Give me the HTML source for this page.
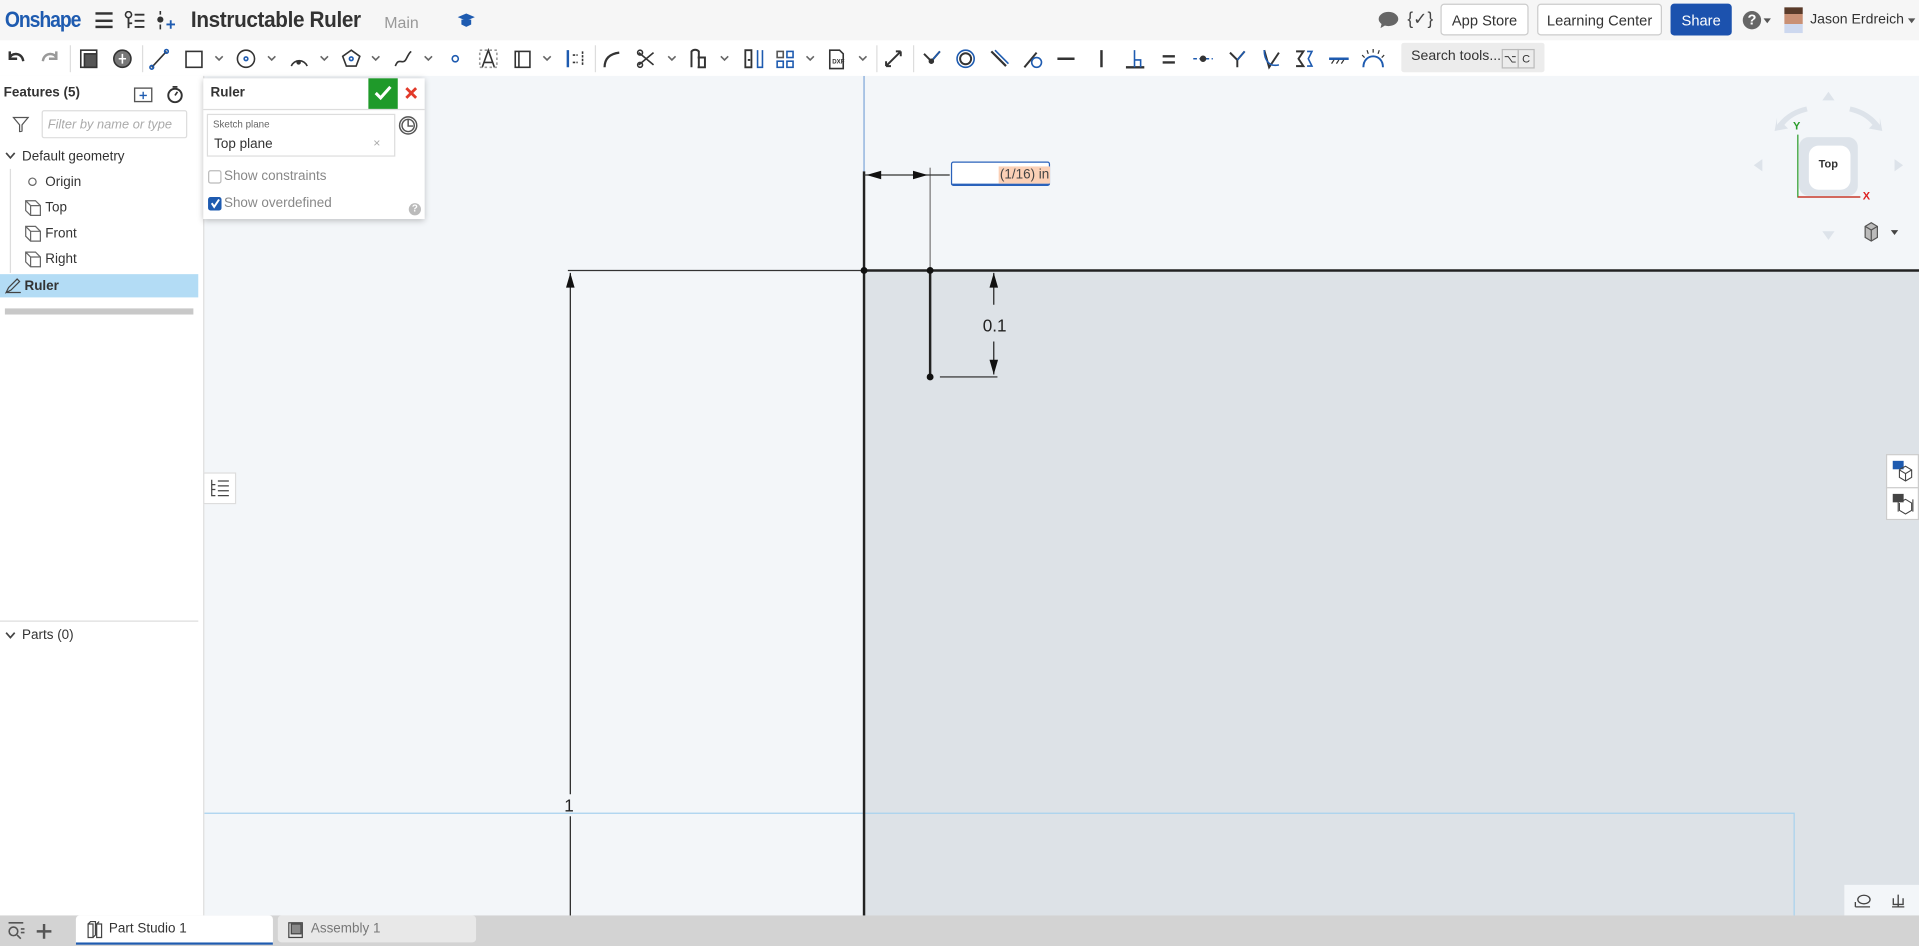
<!DOCTYPE html>
<html><head><meta charset="utf-8"><style>
html,body{margin:0;padding:0;width:1919px;height:946px;overflow:hidden;background:#f3f6f9}
#s{position:absolute;left:0;top:0;width:1568px;height:773px;transform:scale(1.22385);transform-origin:0 0;font-family:"Liberation Sans",sans-serif;color:#333;overflow:hidden;background:#f3f6f9}
.a{position:absolute}
.hdr{left:0;top:0;width:1568px;height:33px;background:#f6f6f6}
.tb{left:0;top:33px;width:1568px;height:29px;background:#fff}
.btn{position:absolute;top:3px;height:26px;border:1px solid #ccc;border-radius:3px;background:#fff;font-size:12px;line-height:26px;text-align:center;box-sizing:border-box}
.sep{position:absolute;top:37px;width:1px;height:22px;background:#ddd}
.lp{left:0;top:62px;width:166px;height:686px;background:#fff;border-right:1px solid #ddd}
.it{position:absolute;font-size:11px;color:#333}
.cb{position:absolute;width:9px;height:9px;border:1px solid #bbb;border-radius:2px;background:#fff}
</style></head><body><div id="s">
<div class="a hdr"></div>
<div class="a" style="left:4px;top:6px;font-size:18px;font-weight:bold;color:#1e5bb0;letter-spacing:-1px;transform:scaleX(.88);transform-origin:0 0">Onshape</div>
<div class="a" style="left:78px;top:10px;width:14px;height:13px;border-top:2.5px solid #333;border-bottom:2.5px solid #333;box-sizing:border-box"></div>
<div class="a" style="left:78px;top:15.5px;width:14px;height:2.5px;background:#333"></div>
<svg class="a" style="left:101px;top:9px" width="18" height="16"><circle cx="4" cy="3" r="2.5" fill="none" stroke="#333" stroke-width="1.3"/><path d="M4 6v8M4 10h3M9 3h8M9 8h8M9 13h8" stroke="#333" stroke-width="1.5" fill="none"/></svg>
<svg class="a" style="left:127px;top:8px" width="16" height="17"><path d="M4 1v3M4 12v4" stroke="#333" stroke-width="1.3"/><circle cx="4" cy="8" r="2.5" fill="#333"/><path d="M9 12h7M12.5 8.5v7" stroke="#1e5bb0" stroke-width="1.5"/></svg>
<div class="a" style="left:156px;top:6px;font-size:18px;font-weight:bold;color:#333;letter-spacing:-0.3px;transform:scaleX(.94);transform-origin:0 0">Instructable Ruler</div>
<div class="a" style="left:314px;top:11px;font-size:13px;color:#999">Main</div>
<svg class="a" style="left:373px;top:9px" width="16" height="15"><path d="M1 5l7-3 7 3-7 3z" fill="#1e5bb0"/><path d="M4 7v4l4 2 4-2V7" fill="#1e5bb0"/></svg>
<svg class="a" style="left:1126px;top:9px" width="17" height="15"><ellipse cx="8.5" cy="6.5" rx="8" ry="5.8" fill="#666"/><path d="M3 10l-1 4 5-3z" fill="#666"/></svg>
<div class="a" style="left:1150px;top:7px;font-size:14px;color:#444">{✓}</div>
<div class="btn" style="left:1177px;width:72px">App Store</div>
<div class="btn" style="left:1256px;width:102px">Learning Center</div>
<div class="btn" style="left:1365px;width:50px;background:#1c52ae;border-color:#1c52ae;color:#fff">Share</div>
<div class="a" style="left:1424px;top:9px;width:15px;height:15px;border-radius:50%;background:#666;color:#fff;font-size:12px;font-weight:bold;text-align:center;line-height:15px">?</div>
<div class="a" style="left:1441px;top:15px;border:3.5px solid transparent;border-top:4px solid #555"></div>
<div class="a" style="left:1458px;top:6px;width:15px;height:21px;background:linear-gradient(#5a3b2a 0 25%,#c99075 25% 65%,#cdd8ef 65%)"></div>
<div class="a" style="left:1479px;top:10px;font-size:11.5px;color:#333">Jason Erdreich</div>
<div class="a" style="left:1559px;top:15px;border:3.5px solid transparent;border-top:4px solid #555"></div>

<div class="a tb"></div>
<svg class="a" style="left:0;top:33px" width="1140" height="29" fill="none" stroke="#333" stroke-width="1.3">
<path d="M8 15c0-5 10-6 11 2M8 9v6h6" stroke-width="2"/>
<path d="M46 15c0-5-10-6-11 2M46 9v6h-6" stroke="#999" stroke-width="2"/>
<rect x="66" y="8" width="13" height="14"/><rect x="69" y="11" width="10" height="11" fill="#555"/>
<circle cx="100" cy="15" r="7" fill="#777" stroke="#333"/><path d="M100 11v8M97 15h6" stroke="#fff"/>
<path d="M124 22l12-13" stroke="#333"/><circle cx="124" cy="22" r="1.5" stroke="#1e5bb0"/><circle cx="136" cy="9" r="1.5" stroke="#1e5bb0"/>
<rect x="152" y="9" width="13" height="13"/>
<circle cx="201" cy="15" r="7"/><circle cx="201" cy="15" r="1.5" stroke="#1e5bb0"/>
<path d="M238 21a7 7 0 0 1 13 0"/><circle cx="244" cy="18" r="1.2" fill="#333"/>
<path d="M287 8l7 5-3 8h-8l-3-8z"/><circle cx="287" cy="15" r="1.5" stroke="#1e5bb0"/>
<path d="M323 21c3-8 6 0 9-6s3-5 4-6"/>
<circle cx="372" cy="15" r="2.5" stroke="#1e5bb0"/>
<path d="M394 22l5-14 5 14M396 18h6"/><rect x="392" y="8" width="14" height="14" stroke-dasharray="2 2" stroke="#999"/>
<rect x="421" y="9" width="12" height="13"/><path d="M424 9v13"/>
<path d="M464 8v14" stroke="#1e5bb0" stroke-width="2"/><path d="M468 12h4M468 18h4M476 9v12" stroke-dasharray="2 1"/>
<path d="M494 22c0-7 4-11 12-12" stroke-width="1.8"/>
<path d="M522 10l12 10M522 20l12-10"/><circle cx="523" cy="10" r="2"/><circle cx="523" cy="20" r="2"/>
<path d="M565 22V9a4 4 0 0 1 6 0v13M570 14h6v8h-6" stroke-width="1.6"/>
<path d="M609 8h5v14h-5zM611 16h2" stroke-width="1.5"/><path d="M619 8v14h4V8" stroke="#1e5bb0"/>
<rect x="635" y="9" width="5" height="5" stroke="#555"/><rect x="643" y="9" width="5" height="5" stroke="#1e5bb0"/><rect x="635" y="17" width="5" height="5" stroke="#1e5bb0"/><rect x="643" y="17" width="5" height="5" stroke="#1e5bb0"/>
<path d="M678 8h8l3 3v12h-11z"/>
<path d="M724 21l12-12M724 21v-4M724 21h4M736 9h-4M736 9v4" stroke-width="1.6"/>
<path d="M755 11l6 6M768 9l-7 8" stroke-width="1.6"/><path d="M768 9l-7 8" stroke="#1e5bb0"/><circle cx="761" cy="17" r="1.6" fill="#333"/>
<circle cx="789" cy="15" r="7" stroke="#1e5bb0"/><circle cx="789" cy="15" r="4.5" stroke-width="1.6"/>
<path d="M810 9l12 12" stroke-width="1.8"/><path d="M813 8l11 11" stroke="#1e5bb0"/>
<path d="M837 22l10-12" stroke-width="1.6"/><circle cx="847" cy="18" r="4" stroke="#1e5bb0"/>
<path d="M864 15h14" stroke-width="2"/>
<path d="M900 8v14" stroke-width="2"/>
<path d="M920 22h15" stroke-width="2"/><path d="M927 8v14M927 16h5v6" stroke="#1e5bb0"/>
<path d="M950 13h10M950 18h10" stroke-width="2"/>
<path d="M975 15h16" stroke="#1e5bb0" stroke-dasharray="3 2"/><circle cx="983" cy="15" r="2" fill="#333"/>
<path d="M1005 10l6 6 6-7M1011 16v6" stroke-width="1.6"/><path d="M1011 16l6-7" stroke="#1e5bb0"/>
<path d="M1033 8l4 14 8-12" stroke-width="1.6"/><path d="M1033 8c0 8 4 14 12 12" stroke="#1e5bb0"/>
<path d="M1059 9h6l-4 6 4 6h-6" stroke-width="1.6"/><path d="M1068 9h4l-3 6 3 6h-4" stroke="#1e5bb0"/>
<path d="M1086 15h16" stroke="#1e5bb0" stroke-width="2"/><path d="M1088 19l2-3M1092 19l2-3M1096 19l2-3" stroke-width="1"/>
<path d="M1114 22c0-12 16-12 16 0" stroke="#1e5bb0" stroke-width="1.6"/><path d="M1115 14l-2-2M1122 10v-3M1129 14l2-2M1118 11l-1-3M1126 11l1-3" stroke-width="1"/>
</svg>
<svg class="a" style="left:0;top:33px" width="720" height="29" fill="none" stroke="#666" stroke-width="1.3"><path d="M176 13l3 3 3-3M219 13l3 3 3-3M262 13l3 3 3-3M304 13l3 3 3-3M347 13l3 3 3-3M444 13l3 3 3-3M546 13l3 3 3-3M589 13l3 3 3-3M659 13l3 3 3-3M702 13l3 3 3-3"/></svg>
<div class="sep" style="left:57px"></div><div class="sep" style="left:116px"></div><div class="sep" style="left:486px"></div><div class="sep" style="left:716px"></div><div class="sep" style="left:746px"></div>
<div class="a" style="left:680px;top:48px;font-size:5px;font-weight:bold;color:#333">DXF</div>
<div class="a" style="left:1145px;top:35px;width:117px;height:24px;background:#ececec;border-radius:2px"></div>
<div class="a" style="left:1153px;top:40px;font-size:11.5px;color:#333">Search tools...</div>
<div class="a" style="left:1227px;top:40px;width:12px;height:14px;border:1px solid #bbb;font-size:9px;text-align:center;line-height:14px;color:#333">⌥</div>
<div class="a" style="left:1240px;top:40px;width:12px;height:14px;border:1px solid #bbb;font-size:9px;text-align:center;line-height:14px;color:#333">C</div>

<svg class="a" style="left:0;top:62px" width="1568" height="686">
<rect x="706" y="159" width="862" height="527" fill="#dde2e7"/>
<path d="M706 0v78" stroke="#7ea7d8" stroke-width="1"/>
<path d="M166 602.5h1300v84M706 588v98" stroke="#a8d2ee" stroke-width="1" fill="none"/>
<path d="M464 159h242" stroke="#333" stroke-width="1"/>
<path d="M706 159h862" stroke="#222" stroke-width="2"/>
<path d="M706 78v608" stroke="#222" stroke-width="2"/>
<path d="M760 75v84" stroke="#777" stroke-width="1"/>
<path d="M760 159v87" stroke="#222" stroke-width="2"/>
<path d="M706 81h70" stroke="#333" stroke-width="1"/>
<path d="M708 81l12-3.5v7zM758 81l-12-3.5v7z" fill="#111"/>
<path d="M768 246h47M812 161v26M812 217v27M466 161v426M466 605v81" stroke="#222" stroke-width="1"/>
<path d="M812 161l-3.5 12h7zM812 244l-3.5-12h7zM466 161l-3.5 12h7z" fill="#111"/>
<circle cx="706" cy="159" r="2.8" fill="#111"/><circle cx="760" cy="159" r="2.8" fill="#111"/><circle cx="760" cy="246" r="2.8" fill="#111"/>
</svg>
<div class="a" style="left:803px;top:258px;font-size:14px;color:#222">0.1</div>
<div class="a" style="left:461px;top:650px;font-size:14px;color:#222">1</div>
<div class="a" style="left:777px;top:132px;width:81px;height:20px;background:#fff;border:1px solid #2a62bb;border-bottom:2px solid #2a62bb;border-radius:2px;box-sizing:border-box"></div>
<div class="a" style="left:816px;top:136px;height:14px;padding:0 1px;background:#fbd0b6;font-size:11px;line-height:14px;color:#444">(1/16) in</div>

<svg class="a" style="left:1430px;top:72px" width="130" height="130" fill="#dde3ea">
<path d="M64 3l5 7h-10z"/><path d="M64 124l5-7h-10z"/><path d="M3 63l7-5v10z"/><path d="M125 63l-7-5v10z"/>
<path d="M22 30c7-9 15-13 24-15l1 4c-8 2-14 5-19 11l3 3-11 2 2-11z"/><path d="M106 30c-7-9-15-13-24-15l-1 4c8 2 14 5 19 11l-3 3 11 2-2-11z"/>
<rect x="40" y="40" width="48" height="48" rx="8"/><rect x="48" y="47" width="34" height="36" rx="8" fill="#fff"/>
<path d="M39 38v51h51" stroke="#2a9c2a" stroke-width="1" fill="none"/><path d="M39 89h51" stroke="#d22" stroke-width="1"/>
</svg>
<div class="a" style="left:1465px;top:98px;font-size:9px;font-weight:bold;color:#2a9c2a">Y</div>
<div class="a" style="left:1522px;top:155px;font-size:9px;font-weight:bold;color:#d22">X</div>
<div class="a" style="left:1486px;top:129px;font-size:9px;font-weight:bold;color:#333">Top</div>
<div class="a" style="left:1515px;top:178px;width:40px;height:24px;background:#f3f6f9"></div>
<svg class="a" style="left:1522px;top:181px" width="14" height="17"><path d="M2 4l5-3 5 3v9l-5 3-5-3z" fill="#bbb" stroke="#555"/><path d="M2 4l5 3 5-3M7 7v9" stroke="#555" fill="none"/></svg>
<div class="a" style="left:1545px;top:188px;border:3px solid transparent;border-top:4px solid #444"></div>
<div class="a" style="left:1541px;top:371px;width:27px;height:54px;background:#fff;border:1px solid #ccc;box-sizing:border-box"></div>
<div class="a" style="left:1541px;top:398px;width:27px;height:1px;background:#ccc"></div>
<svg class="a" style="left:1546px;top:376px" width="18" height="45" fill="none" stroke="#444" stroke-width=".9"><rect x="1" y="1" width="8" height="6" fill="#1e5bb0" stroke="#1e5bb0"/><path d="M7 7l4-2 5 3v6l-5 3-5-3V8zM6 8l5 3 5-3M11 11v6"/><rect x="1" y="28" width="8" height="6" fill="#444"/><path d="M7 34l4-2 5 3v6l-5 3-5-3v-6"/><path d="M5 32v10M17 32v10"/></svg>
<div class="a" style="left:1507px;top:723px;width:61px;height:25px;background:#f3f6f9"></div>
<svg class="a" style="left:1514px;top:729px" width="50" height="14" fill="none" stroke="#444" stroke-width="1.1"><ellipse cx="9" cy="6" rx="5" ry="3.5"/><path d="M2 12h12M2 12V8"/><path d="M37 2v10M32 12h10M33 5v5h8V5"/></svg>

<div class="a lp"></div>
<div class="it" style="left:3px;top:70px;font-weight:bold">Features (5)</div>
<svg class="a" style="left:109px;top:69px" width="44" height="16" fill="none" stroke="#555" stroke-width="1.1"><rect x="1" y="3" width="14" height="11"/><path d="M8 6v6M5 9h6" stroke="#1e5bb0"/><circle cx="34" cy="9" r="5.5" stroke="#333" stroke-width="1.6"/><path d="M32 2h4M34 9l2-3" stroke="#333" stroke-width="1.4"/></svg>
<svg class="a" style="left:10px;top:95px" width="14" height="13"><path d="M1 1h12l-5 6v5l-2 1V7z" fill="none" stroke="#555"/></svg>
<div class="a" style="left:34px;top:90px;width:119px;height:23px;border:1px solid #ddd;box-sizing:border-box;border-radius:2px"></div>
<div class="it" style="left:39px;top:96px;font-style:italic;color:#aaa;font-size:10.5px">Filter by name or type</div>
<svg class="a" style="left:4px;top:124px" width="9" height="7"><path d="M1 1l3.5 4L8 1" fill="none" stroke="#444" stroke-width="1.4"/></svg>
<div class="it" style="left:18px;top:122px">Default geometry</div>
<div class="a" style="left:8px;top:138px;width:1px;height:85px;background:#ddd"></div>
<div class="a" style="left:23px;top:145px;width:5px;height:5px;border:1px solid #666;border-radius:50%"></div>
<div class="it" style="left:37px;top:143px">Origin</div>
<svg class="a" style="left:20px;top:163px" width="14" height="56" fill="none" stroke="#666"><path d="M1 1h8l4 4v8H5L1 9zM5 13V5h8M5 5L1 1"/><path d="M1 22h8l4 4v8H5l-4-4zM5 34v-8h8M5 26l-4-4"/><path d="M1 43h8l4 4v8H5l-4-4zM5 55v-8h8M5 47l-4-4"/></svg>
<div class="it" style="left:37px;top:164px">Top</div>
<div class="it" style="left:37px;top:185px">Front</div>
<div class="it" style="left:37px;top:206px">Right</div>
<div class="a" style="left:0;top:224px;width:162px;height:19px;background:#b3dcf5"></div>
<svg class="a" style="left:4px;top:227px" width="14" height="13"><path d="M1 12l2-4 7-7 2 2-7 7zM1 12h12" fill="none" stroke="#444"/></svg>
<div class="it" style="left:20px;top:228px;font-weight:bold">Ruler</div>
<div class="a" style="left:4px;top:252px;width:154px;height:5px;background:#c8c8c8"></div>
<div class="a" style="left:0;top:507px;width:162px;height:1px;background:#ddd"></div>
<svg class="a" style="left:4px;top:516px" width="9" height="7"><path d="M1 1l3.5 4L8 1" fill="none" stroke="#444" stroke-width="1.4"/></svg>
<div class="it" style="left:18px;top:513px">Parts (0)</div>
<div class="a" style="left:166px;top:386px;width:27px;height:26px;background:#fff;border:1px solid #ddd;box-sizing:border-box"></div>
<svg class="a" style="left:172px;top:391px" width="16" height="15" fill="none" stroke="#444"><path d="M1 1v13h3M6 2h9M6 6h9M6 10h9M6 14h9M1 5h3M1 9h3"/></svg>

<div class="a" style="left:166px;top:64px;width:181px;height:115px;background:#fff;box-shadow:0 1px 5px rgba(0,0,0,.25)"></div>
<div class="it" style="left:172px;top:70px;font-weight:bold;font-size:11px">Ruler</div>
<div class="a" style="left:301px;top:64px;width:24px;height:25px;background:#1f9a2a"></div>
<svg class="a" style="left:305px;top:69px" width="16" height="14"><path d="M2 7l4 4 8-9" fill="none" stroke="#fff" stroke-width="2.5"/></svg>
<svg class="a" style="left:330px;top:70px" width="12" height="12"><path d="M2 2l8 8M10 2l-8 8" stroke="#e23a2a" stroke-width="2.3"/></svg>
<div class="a" style="left:166px;top:89px;width:181px;height:1px;background:#ddd"></div>
<div class="a" style="left:169px;top:93px;width:154px;height:35px;border:1px solid #ddd;box-sizing:border-box"></div>
<div class="it" style="left:174px;top:97px;font-size:8px;color:#666">Sketch plane</div>
<div class="it" style="left:175px;top:112px">Top plane</div>
<div class="it" style="left:305px;top:112px;color:#aaa;font-size:10px">×</div>
<svg class="a" style="left:325px;top:94px" width="17" height="17" fill="none" stroke="#555" stroke-width="1.2"><circle cx="8.5" cy="8.5" r="7"/><circle cx="8.5" cy="8.5" r="5"/><path d="M8.5 4v5h4"/></svg>
<div class="cb" style="left:170px;top:139px"></div>
<div class="it" style="left:183px;top:138px;color:#888">Show constraints</div>
<div class="cb" style="left:170px;top:161px;background:#1e5bb0;border-color:#1e5bb0"></div>
<svg class="a" style="left:171px;top:161px" width="10" height="10"><path d="M2 5l2 3 4-6" fill="none" stroke="#fff" stroke-width="1.6"/></svg>
<div class="it" style="left:183px;top:160px;color:#888">Show overdefined</div>
<div class="a" style="left:334px;top:166px;width:10px;height:10px;border-radius:50%;background:#bbb;color:#fff;font-size:8px;font-weight:bold;text-align:center;line-height:10px">?</div>

<div class="a" style="left:0;top:748px;width:1568px;height:25px;background:#d3d3d3"></div>
<svg class="a" style="left:6px;top:753px" width="44" height="15" fill="none" stroke="#555" stroke-width="1.3"><path d="M1 1h12"/><circle cx="5" cy="8" r="3.5"/><path d="M8 11l3 3M11 6h3M11 9h3"/><path d="M30 2v12M24 8h12" stroke-width="2"/></svg>
<div class="a" style="left:62px;top:748px;width:161px;height:22px;background:#fff;border-bottom:2px solid #1e5bb0;border-radius:3px 3px 0 0"></div>
<svg class="a" style="left:70px;top:751px" width="16" height="16" fill="none" stroke="#444"><path d="M2 4h4v11H2zM2 4l2-2h4v11l-2 2M9 4h4v11H9zM9 4l2-2"/></svg>
<div class="it" style="left:89px;top:753px">Part Studio 1</div>
<div class="a" style="left:227px;top:748px;width:162px;height:22px;background:#e8e8e8;border-radius:3px"></div>
<svg class="a" style="left:234px;top:751px" width="16" height="16" fill="none" stroke="#444"><rect x="2" y="3" width="11" height="12"/><rect x="4" y="4" width="8" height="8" fill="#888"/></svg>
<div class="it" style="left:254px;top:753px;color:#777">Assembly 1</div>
</div></body></html>
